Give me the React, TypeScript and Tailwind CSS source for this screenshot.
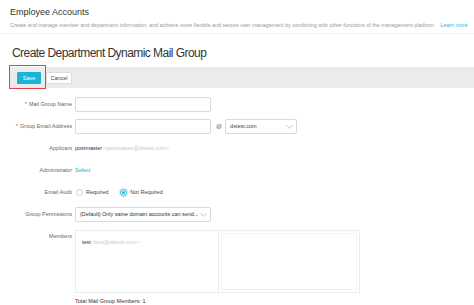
import React from 'react';

const Label = ({ text, required }: { text: string; required?: boolean }) => (
  <div className="w-[72px] shrink-0 text-right text-[5.5px] leading-[15px] text-[#666] whitespace-nowrap">
    {required && <span className="text-[#e0434f] mr-[2px]">*</span>}
    {text}
  </div>
);

const Chevron = () => (
  <svg width="7" height="4" viewBox="0 0 7 4" className="shrink-0">
    <path d="M0.5 0.5 L3.5 3.2 L6.5 0.5" fill="none" stroke="#aaa" strokeWidth="0.7" />
  </svg>
);

const Radio = ({ checked, label }: { checked?: boolean; label: string }) => (
  <label className="flex items-center gap-[3px]">
    {checked ? (
      <span className="w-[7px] h-[7px] rounded-full border border-[#1ab3d9] flex items-center justify-center shadow-[0_0_0_1.5px_#d4f0f8]">
        <span className="w-[3px] h-[3px] rounded-full bg-[#1ab3d9]" />
      </span>
    ) : (
      <span className="w-[7px] h-[7px] rounded-full border border-[#cfcfcf] bg-white" />
    )}
    <span className="text-[5.5px] text-[#444]">{label}</span>
  </label>
);

export default function App() {
  return (
    <div className="w-[474px] h-[305px] overflow-hidden bg-white font-['Liberation_Sans',Arial,sans-serif]">
      <div className="px-[10px] pt-[7px] pb-[5px] border-b border-[#f0f0f0]">
        <h1 className="text-[9px] leading-[10px] text-[#333]">Employee Accounts</h1>
        <p className="mt-[5px] text-[5.4px] leading-[6px] text-[#9a9a9a] whitespace-nowrap">
          Create and manage member and department information, and achieve more flexible and secure user management by combining with other functions of the management platform.
          <span className="text-[#3bb3e3] ml-[5px]">Learn more</span>
        </p>
      </div>

      <h2 className="mt-[12px] ml-[12px] text-[12px] leading-[14px] tracking-[-0.55px] text-[#333]">
        Create Department Dynamic Mail Group
      </h2>

      <div className="relative mt-[7px] ml-[10px] h-[21px] bg-[#ebebeb] flex items-center gap-[5px] pl-[7px]">
        <button className="w-[24px] h-[12px] rounded-[1px] bg-[#1ab3d9] text-white text-[5.5px] leading-[12px]">Save</button>
        <button className="w-[26px] h-[12px] rounded-[1px] bg-white border border-[#dcdcdc] text-[#444] text-[5.5px] leading-[10px]">Cancel</button>
        <div className="absolute left-[-1px] top-[-2px] w-[37px] h-[24px] border-[1.5px] border-[#e0434f]" />
      </div>

      <div className="pt-[9px] flex flex-col gap-[7px]">
        <div className="flex">
          <Label text="Mail Group Name" required />
          <div className="ml-[3px] w-[136px] h-[15px] border border-[#d9d9d9] rounded-[2px] bg-white" />
        </div>

        <div className="flex items-center">
          <Label text="Group Email Address" required />
          <div className="ml-[3px] w-[136px] h-[15px] border border-[#d9d9d9] rounded-[2px] bg-white" />
          <span className="ml-[5px] text-[6px] text-[#666]">@</span>
          <div className="ml-[3px] w-[72px] h-[15px] border border-[#d9d9d9] rounded-[2px] bg-white flex items-center justify-between pl-[4px] pr-[3px]">
            <span className="text-[5.5px] text-[#444]">dstest.com</span>
            <Chevron />
          </div>
        </div>

        <div className="flex items-center">
          <Label text="Applicant" />
          <div className="ml-[3px] text-[5.5px] leading-[15px] whitespace-nowrap">
            <span className="text-[#333]">postmaster</span>
            <span className="ml-[1px] text-[#c8c8c8]">&lt;postmaster@dstest.com&gt;</span>
          </div>
        </div>

        <div className="flex items-center">
          <Label text="Administrator" />
          <span className="ml-[3px] text-[5.5px] leading-[15px] text-[#1aa5d8]">Select</span>
        </div>

        <div className="flex items-center h-[15px]">
          <Label text="Email Audit" />
          <div className="ml-[4px] flex items-center gap-[12px]">
            <Radio label="Required" />
            <Radio label="Not Required" checked />
          </div>
        </div>

        <div className="flex items-center">
          <Label text="Group Permissions" />
          <div className="ml-[3px] w-[136px] h-[15px] border border-[#d9d9d9] rounded-[2px] bg-white flex items-center justify-between pl-[4px] pr-[3px]">
            <span className="text-[5.5px] text-[#333] whitespace-nowrap tracking-[-0.05px]">(Default) Only same domain accounts can send...</span>
            <Chevron />
          </div>
        </div>

        <div className="flex mt-[1px]">
          <div className="w-[72px] shrink-0 text-right text-[5.5px] leading-[12px] text-[#666]">Members</div>
          <div className="ml-[3px]">
            <div className="w-[285px] h-[63px] border border-[#ececec] flex">
              <div className="w-[143px] border-r border-[#ececec] pl-[6px] pt-[7px] text-[5.5px] whitespace-nowrap">
                <span className="text-[#333]">test</span>
                <span className="ml-[1px] text-[#cccccc]">&lt;test@dstest.com&gt;</span>
              </div>
              <div className="flex-1 m-[2px] border border-[#f3f3f3]" />
            </div>
            <div className="mt-[4px] text-[5.5px] leading-[8px] text-[#333]">Total Mail Group Members: 1</div>
          </div>
        </div>
      </div>
    </div>
  );
}
